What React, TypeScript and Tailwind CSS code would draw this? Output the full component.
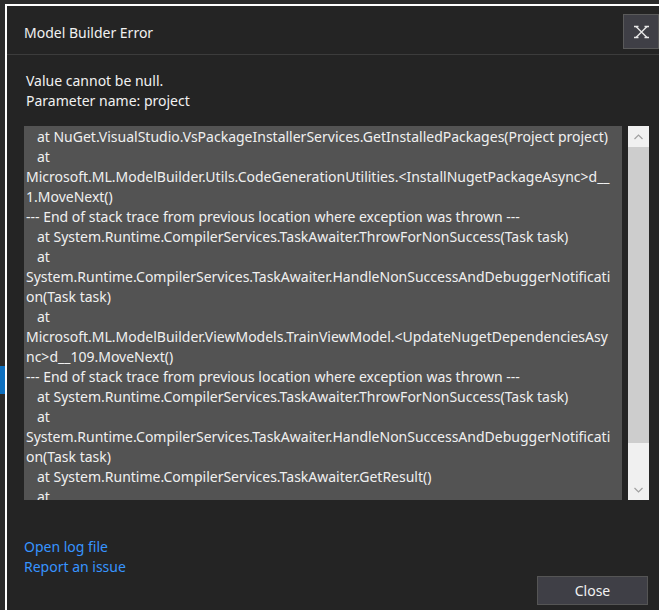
import React from "react";

const lines = [
  "   at NuGet.VisualStudio.VsPackageInstallerServices.GetInstalledPackages(Project project)",
  "   at",
  "Microsoft.ML.ModelBuilder.Utils.CodeGenerationUtilities.<InstallNugetPackageAsync>d__",
  "1.MoveNext()",
  "--- End of stack trace from previous location where exception was thrown ---",
  "   at System.Runtime.CompilerServices.TaskAwaiter.ThrowForNonSuccess(Task task)",
  "   at",
  "System.Runtime.CompilerServices.TaskAwaiter.HandleNonSuccessAndDebuggerNotificati",
  "on(Task task)",
  "   at",
  "Microsoft.ML.ModelBuilder.ViewModels.TrainViewModel.<UpdateNugetDependenciesAsy",
  "nc>d__109.MoveNext()",
  "--- End of stack trace from previous location where exception was thrown ---",
  "   at System.Runtime.CompilerServices.TaskAwaiter.ThrowForNonSuccess(Task task)",
  "   at",
  "System.Runtime.CompilerServices.TaskAwaiter.HandleNonSuccessAndDebuggerNotificati",
  "on(Task task)",
  "   at System.Runtime.CompilerServices.TaskAwaiter.GetResult()",
  "   at",
];

export default function App() {
  return (
    <div
      className="w-[659px] h-[610px] bg-[#2b2b2b] flex overflow-hidden text-[14px] text-[#f1f1f1]"
      style={{ fontFamily: '"Segoe UI", "Noto Sans", sans-serif' }}
    >
      {/* left background strip */}
      <div className="w-[5px] shrink-0 flex flex-col">
        <div className="h-[366px]" />
        <div className="h-[28px] bg-[#0e70c0]" />
      </div>
      <div className="flex-1 flex flex-col pt-[4px]">
        <div className="flex-1 border-l-2 border-t-2 border-white bg-[#242424] flex flex-col">
          {/* header */}
          <div className="h-[49px] flex justify-between border-b border-[#3c3c3c] shrink-0">
            <div className="pl-[17px] pt-[17px] leading-[20px]">Model Builder Error</div>
            <div className="mt-[8px] w-[36px] h-[35px] bg-[#3f3f46] border border-[#5a5a5a] flex items-center justify-center">
              <svg width="17" height="14" viewBox="0 0 17 14" fill="none" stroke="#e8e8e8" strokeWidth="1.4">
                <path d="M3 1.5 L14 12.5 M14 1.5 L3 12.5" />
                <path d="M1 1.5 H5.5 M11.5 1.5 H16 M1 12.5 H5.5 M11.5 12.5 H16" />
              </svg>
            </div>
          </div>
          <div className="pl-[19px] pt-[16px] leading-[20px]">
            <div>Value cannot be null.</div>
            <div>Parameter name: project</div>
          </div>
          <div className="flex ml-[17px] mt-[15px] h-[374px] gap-[6px] shrink-0">
            <div className="w-[598px] h-full bg-[#535353] overflow-hidden pl-[2px] pt-[1px] text-[#f0f0f0] leading-[20px]">
              {lines.map((l, i) => (
                <div key={i} className="whitespace-pre">
                  {l}
                </div>
              ))}
            </div>
            <div className="w-[21px] h-full bg-[#f0f0f0] flex flex-col">
              <div className="h-[21px] flex items-center justify-center">
                <svg width="9" height="6" viewBox="0 0 9 6" fill="none" stroke="#a0a0a0" strokeWidth="1.2">
                  <path d="M0.5 5 L4.5 1 L8.5 5" />
                </svg>
              </div>
              <div className="h-[296px] bg-[#cdcdcd]" />
              <div className="flex-1 flex items-end justify-center pb-[7px]">
                <svg width="9" height="6" viewBox="0 0 9 6" fill="none" stroke="#a0a0a0" strokeWidth="1.2">
                  <path d="M0.5 1 L4.5 5 L8.5 1" />
                </svg>
              </div>
            </div>
          </div>
          <div className="pl-[17px] mt-[37px] leading-[20px] text-[#3794ff]">
            <div>Open log file</div>
            <div>Report an issue</div>
          </div>
          <div className="flex justify-end pr-[11px] -mt-px">
            <div className="w-[111px] h-[29px] bg-[#3f3f46] border border-[#555555] flex items-center justify-center">
              Close
            </div>
          </div>
        </div>
      </div>
    </div>
  );
}
